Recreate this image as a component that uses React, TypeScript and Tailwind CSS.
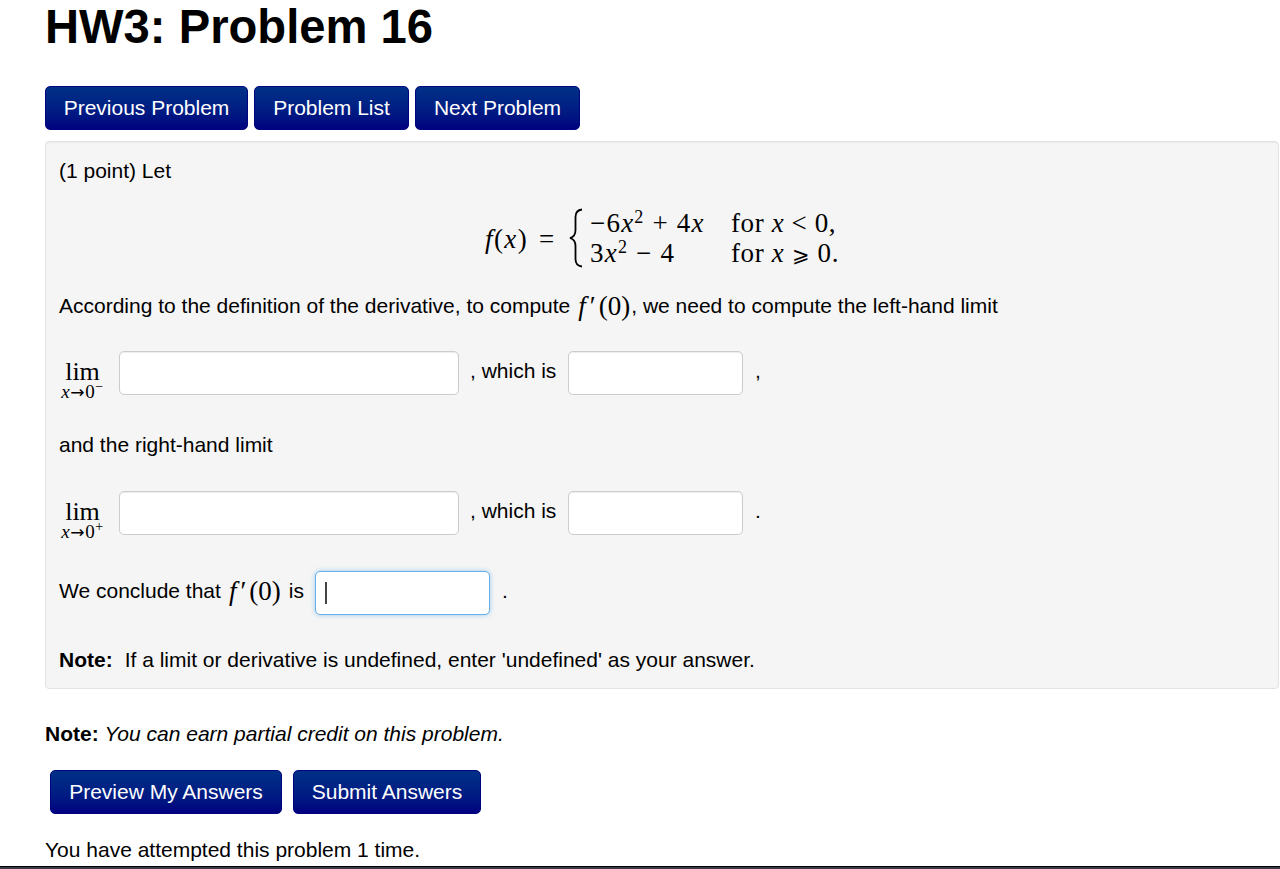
const navButton =
  "h-[44px] rounded-[5px] border border-[#00057f] bg-gradient-to-b from-[#003087] to-[#00007f] pb-[2px] text-white text-[21px] leading-none flex items-center justify-center";
const answerBox = "h-[44px] rounded-[5px] border border-[#cccccc] bg-white shadow-[inset_0_1px_1px_rgba(0,0,0,0.075)]";
const mathFont = "font-['Liberation_Serif',serif]";

const FPrime = ({ className }: { className: string }) => (
  <span className={`${mathFont} flex items-baseline text-[27px] leading-none ${className}`}>
    <i className="mr-[4px]">f</i>
    <span className="mr-[3px]">′</span>
    (0)
  </span>
);

const Limit = ({ sup }: { sup: string }) => (
  <div className={`${mathFont} mt-[17px] mr-[13px] flex w-[47px] flex-col items-center text-black`}>
    <span className="text-[26px] leading-[20px]">lim</span>
    <span className="-mt-[2px] text-[19px] leading-[18px] tracking-[0.6px] whitespace-nowrap">
      <i>x</i>
      <span className="font-['DejaVu_Sans',sans-serif] text-[17px]">→</span>0
      <sup className="static align-[7px] text-[14px] leading-none">{sup}</sup>
    </span>
  </div>
);

const LimitRow = ({ sup, end, className }: { sup: string; end: string; className: string }) => (
  <div className={`flex h-[44px] items-center ${className}`}>
    <Limit sup={sup} />
    <input className={`${answerBox} w-[340px]`} readOnly />
    <span className="mb-[4px] ml-[11px] w-[98px]">, which is</span>
    <input className={`${answerBox} w-[175px]`} readOnly />
    <span className="mb-[4px] ml-[12px]">{end}</span>
  </div>
);

export default function App() {
  return (
    <div className="relative h-[869px] w-[1280px] overflow-hidden bg-white pl-[45px] font-['Liberation_Sans',Arial,sans-serif] text-[21px] text-black">
      <h1 className="pt-[1px] text-[47.2px] leading-[52px] font-bold">HW3: Problem 16</h1>

      <nav className="mt-[33px] flex gap-[6px]">
        <button className={`${navButton} w-[203px]`}>Previous Problem</button>
        <button className={`${navButton} w-[155px]`}>Problem List</button>
        <button className={`${navButton} w-[165px]`}>Next Problem</button>
      </nav>

      <section className="mt-[11px] h-[548px] w-[1234px] rounded-[4px] border border-[#e3e3e3] bg-[#f5f5f5] pl-[13px] shadow-[inset_0_1px_1px_rgba(0,0,0,0.05)]">
        <p className="mt-[17px] leading-[24px]">(1 point) Let</p>

        <div className={`${mathFont} mt-[26px] flex h-[60px] items-center pl-[426px] text-[27px] tracking-[0.6px] whitespace-nowrap`}>
          <span className="flex w-[82px] gap-[11px] tracking-[1.4px]">
            <span>
              <i>f</i>(<i>x</i>)
            </span>
            <span>=</span>
          </span>
          <svg width="16" height="60" viewBox="0 0 16 60" className="-mt-[2px] shrink-0" aria-hidden="true">
            <path
              d="M15 1.5C10 2 8.5 5 8.5 9V22C8.5 26 7 29 3 30C7 31 8.5 34 8.5 38V51C8.5 55 10 58 15 58.5"
              fill="none"
              stroke="#000"
              strokeWidth="1.8"
            />
          </svg>
          <div className="ml-[7px] grid grid-cols-[141px_auto] leading-[30px]">
            <span className="tracking-[1.2px]">
              −6<i>x</i>
              <sup className="text-[18px] leading-none">2</sup> + 4<i>x</i>
            </span>
            <span>
              for <i>x</i> &lt; 0,
            </span>
            <span className="tracking-[1.2px]">
              3<i>x</i>
              <sup className="text-[18px] leading-none">2</sup> − 4
            </span>
            <span>
              for <i>x</i> <span className="text-[21px]">⩾</span> 0.
            </span>
          </div>
        </div>

        <p className="mt-[17px] flex h-[40px] items-center">
          According to the definition of the derivative, to compute
          <FPrime className="ml-[8px]" />
          <span className="ml-[1px]">, we need to compute the left-hand limit</span>
        </p>

        <LimitRow sup="−" end="," className="mt-[25px]" />

        <p className="mt-[38px] leading-[24px]">and the right-hand limit</p>

        <LimitRow sup="+" end="." className="mt-[34px]" />

        <div className="mt-[36px] flex h-[44px] items-center">
          <span className="mb-[4px]">We conclude that</span>
          <FPrime className="mr-[8px] mb-[4px] ml-[8px]" />
          <span className="mb-[4px]">is</span>
          <div className="ml-[11px] flex h-[44px] w-[175px] items-center rounded-[5px] border border-[#66afe9] bg-white pl-[9px] shadow-[0_0_5px_rgba(102,175,233,0.6)]">
            <span className="h-[22px] w-[2px] bg-[#444444]" />
          </div>
          <span className="mb-[4px] ml-[12px]">.</span>
        </div>

        <p className="mt-[33px] leading-[24px]">
          <b>Note:</b>
          <span className="ml-[12px]">If a limit or derivative is undefined, enter 'undefined' as your answer.</span>
        </p>
      </section>

      <p className="mt-[33px] leading-[24px]">
        <b>Note:</b> <i>You can earn partial credit on this problem.</i>
      </p>

      <div className="mt-[24px] ml-[5px] flex gap-[11px]">
        <button className={`${navButton} w-[232px]`}>Preview My Answers</button>
        <button className={`${navButton} w-[188px]`}>Submit Answers</button>
      </div>

      <p className="mt-[24px] leading-[24px]">You have attempted this problem 1 time.</p>

      <div className="absolute bottom-0 left-0 h-[3px] w-full border-t border-black bg-[#3b3845]" />
    </div>
  );
}
